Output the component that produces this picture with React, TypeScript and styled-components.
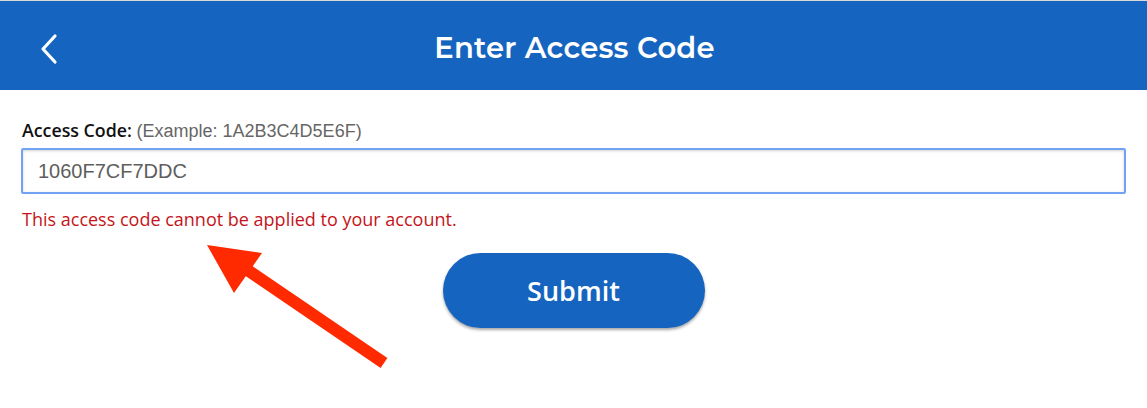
import React, { FunctionComponent, useState } from 'react';
import styled, { createGlobalStyle } from 'styled-components';

const GlobalStyle = createGlobalStyle`
    html, body {
        margin: 0;
        padding: 0;
        background: #ffffff;
    }
    body {
        font-family: 'Open Sans', 'Liberation Sans', sans-serif;
    }
`;

const Page = styled.div`
    position: relative;
    width: 100%;
    min-height: 408px;
    border-top: 1px solid #d9d9d9;
    overflow: hidden;
`;

const Header = styled.header`
    display: flex;
    align-items: center;
    justify-content: center;
    position: relative;
    height: 89px;
    background: #1565c0;
`;

const BackButton = styled.button`
    position: absolute;
    left: 34px;
    top: 28px;
    width: 30px;
    height: 40px;
    padding: 0;
    border: none;
    background: transparent;
    display: flex;
    align-items: center;
    justify-content: center;
    cursor: pointer;
`;

const Title = styled.h1`
    margin: 0;
    font-family: 'Montserrat', 'Lato', 'Open Sans', sans-serif;
    font-size: 29px;
    font-weight: 600;
    color: #ffffff;
    letter-spacing: 0.2px;
    transform: translate(1px, 2px);
`;

const Content = styled.div`
    display: flex;
    flex-direction: column;
    padding: 29px 21px 0 21px;
`;

const Label = styled.label`
    display: block;
    font-family: 'Open Sans', sans-serif;
    font-size: 17.8px;
    font-weight: 600;
    color: #111111;
    line-height: 22px;
    padding-left: 1px;
    margin-bottom: 6px;
`;

const Hint = styled.span`
    font-family: 'Liberation Sans', Arial, sans-serif;
    font-size: 18px;
    font-weight: 400;
    color: #666666;
`;

const CodeInput = styled.input`
    box-sizing: border-box;
    width: 100%;
    height: 46px;
    padding: 0 15px;
    border: 2px solid #72a3f2;
    border-radius: 2px;
    box-shadow: inset 0 1px 3px rgba(0, 0, 0, 0.18);
    font-family: 'Liberation Sans', Arial, sans-serif;
    font-size: 20px;
    color: #5e5e5e;
    caret-color: #333333;
    outline: none;
`;

const ErrorText = styled.p`
    margin: 13px 0 0 1px;
    font-family: 'Open Sans', sans-serif;
    font-size: 18px;
    line-height: 24px;
    color: #c4141a;
`;

const Actions = styled.div`
    display: flex;
    justify-content: center;
    margin-top: 22px;
`;

const SubmitButton = styled.button`
    width: 262px;
    height: 75px;
    border: none;
    border-radius: 38px;
    background: #1565c0;
    box-shadow: 0 2px 3px rgba(0, 0, 0, 0.35);
    font-family: 'Open Sans', sans-serif;
    font-size: 27px;
    font-weight: 600;
    color: #ffffff;
    cursor: pointer;
`;

const Annotation = styled.svg`
    position: absolute;
    left: 0;
    top: 0;
    pointer-events: none;
`;

const ChevronLeft: FunctionComponent = () => (
    <svg width="20" height="32" viewBox="0 0 20 32">
        <path
            d="M16 3 L4 16 L16 29"
            fill="none"
            stroke="#ffffff"
            strokeWidth="3.2"
            strokeLinecap="round"
            strokeLinejoin="round"
        />
    </svg>
);

const App: FunctionComponent = () => {
    const [code, setCode] = useState<string>('1060F7CF7DDC');

    return (
        <Page>
            <GlobalStyle />
            <Header>
                <BackButton aria-label="Back">
                    <ChevronLeft />
                </BackButton>
                <Title>Enter Access Code</Title>
            </Header>
            <Content>
                <Label htmlFor="access-code">
                    Access Code: <Hint>(Example: 1A2B3C4D5E6F)</Hint>
                </Label>
                <CodeInput
                    id="access-code"
                    value={code}
                    autoFocus
                    onChange={(e) => setCode(e.target.value)}
                />
                <ErrorText>This access code cannot be applied to your account.</ErrorText>
                <Actions>
                    <SubmitButton>Submit</SubmitButton>
                </Actions>
            </Content>
            <Annotation width="1147" height="408" viewBox="0 0 1147 408">
                <line x1="384" y1="362" x2="246" y2="268" stroke="#ff2a00" strokeWidth="12" />
                <polygon points="207,244 262,252 234,292" fill="#ff2a00" />
            </Annotation>
        </Page>
    );
};

export default App;
